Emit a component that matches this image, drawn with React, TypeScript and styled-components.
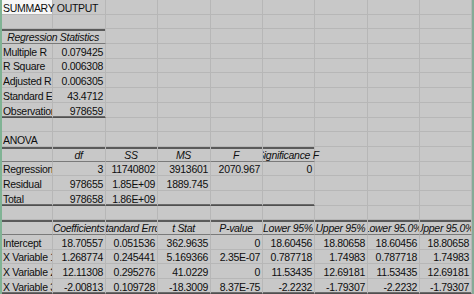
import React from 'react'
import styled, { createGlobalStyle } from 'styled-components'

const GlobalStyle = createGlobalStyle`
  html, body {
    margin: 0;
    padding: 0;
    background: #c8c8c8;
  }
`

const COLS = [51, 53, 52, 53, 52, 52, 53, 52, 52]
const ROW_H = 14.7

const Sheet = styled.div`
  width: 474px;
  height: 294px;
  box-sizing: border-box;
  border-left: 2px solid #80b394;
  border-right: 2px solid #86ab97;
  background: #c8c8c8;
  display: grid;
  grid-template-columns: ${COLS.map((w) => `${w}px`).join(' ')};
  grid-template-rows: repeat(20, ${ROW_H}px);
  overflow: hidden;
  font-family: 'Liberation Sans', Arial, sans-serif;
  font-size: 10.5px;
  letter-spacing: -0.3px;
  color: #0e0e0e;
`

type Align = 'l' | 'r' | 'c'
type Clip = 'both' | 'left' | 'none'

const Cell = styled.div<{
  $align: Align
  $italic?: boolean
  $span?: number
  $clip?: Clip
  $white?: boolean
  $top?: boolean
  $under?: boolean
  $bottom?: boolean
}>`
  grid-column: span ${({ $span }) => $span ?? 1};
  display: flex;
  align-items: flex-end;
  justify-content: ${({ $align }) =>
    $align === 'r' ? 'flex-end' : $align === 'c' ? 'center' : 'flex-start'};
  box-sizing: border-box;
  min-width: 0;
  padding: 0 2px 0 1px;
  line-height: 12px;
  white-space: nowrap;
  overflow: ${({ $clip }) => ($clip === 'both' ? 'hidden' : 'visible')};
  clip-path: ${({ $clip }) => ($clip === 'left' ? 'inset(-4px -40px -4px 0)' : 'none')};
  font-style: ${({ $italic }) => ($italic ? 'italic' : 'normal')};
  background: ${({ $white }) => ($white ? '#f7f7f7' : 'transparent')};
  border-right: 1px solid #b7b7b7;
  border-bottom: 1px solid
    ${({ $bottom, $under }) =>
      $bottom ? '#4f4f4f' : $under ? '#7a7a7a' : '#b7b7b7'};
  box-shadow: ${({ $top, $bottom }) => {
    const s: string[] = []
    if ($top) s.push('inset 0 2px 0 #5a5a5a')
    if ($bottom) s.push('inset 0 -1px 0 #6a6a6a')
    return s.length ? s.join(', ') : 'none'
  }};
`

type Spec = { t: string; a?: Align; i?: boolean; span?: number; clip?: Clip; white?: boolean }

const L = (t: string, clip: Clip = 'both'): Spec => ({ t, a: 'l', clip })
const N = (t: string): Spec => ({ t, a: 'r', clip: 'both' })
const H = (t: string, clip: Clip = 'both'): Spec => ({ t, a: 'c', i: true, clip })

// one entry per sheet row, cells from column A onward
const rows: Spec[][] = [
  [{ t: 'SUMMARY OUTPUT', a: 'l', white: true, clip: 'none' }],
  [],
  [{ t: 'Regression Statistics', a: 'c', i: true, span: 2, clip: 'none' }],
  [L('Multiple R'), N('0.079425')],
  [L('R Square'), N('0.006308')],
  [L('Adjusted R Square'), N('0.006305')],
  [L('Standard Error'), N('43.4712')],
  [L('Observations'), N('978659')],
  [],
  [L('ANOVA', 'none')],
  [L(''), H('df'), H('SS'), H('MS'), H('F'), H('Significance F', 'left')],
  [L('Regression'), N('3'), N('11740802'), N('3913601'), N('2070.967'), N('0')],
  [L('Residual'), N('978655'), N('1.85E+09'), N('1889.745')],
  [L('Total'), N('978658'), N('1.86E+09')],
  [],
  [
    L(''),
    H('Coefficients'),
    H('Standard Error'),
    H('t Stat'),
    H('P-value'),
    H('Lower 95%'),
    H('Upper 95%'),
    H('Lower 95.0%'),
    H('Upper 95.0%'),
  ],
  [L('Intercept'), N('18.70557'), N('0.051536'), N('362.9635'), N('0'), N('18.60456'), N('18.80658'), N('18.60456'), N('18.80658')],
  [L('X Variable 1'), N('1.268774'), N('0.245441'), N('5.169366'), N('2.35E-07'), N('0.787718'), N('1.74983'), N('0.787718'), N('1.74983')],
  [L('X Variable 2'), N('12.11308'), N('0.295276'), N('41.0229'), N('0'), N('11.53435'), N('12.69181'), N('11.53435'), N('12.69181')],
  [L('X Variable 3'), N('-2.00813'), N('0.109728'), N('-18.3009'), N('8.37E-75'), N('-2.2232'), N('-1.79307'), N('-2.2232'), N('-1.79307')],
]

// table borders: header row gets a top rule and an underline, last row a bottom rule
const tables = [
  { head: 2, last: 7, cols: 2 },
  { head: 10, last: 13, cols: 6 },
  { head: 15, last: 19, cols: 9 },
]

const ruleFor = (r: number, c: number) => {
  const t = tables.find((x) => c < x.cols && (r === x.head || r === x.last))
  return {
    top: !!t && r === t.head,
    under: !!t && r === t.head,
    bottom: !!t && r === t.last && r !== t.head,
  }
}

const App = () => {
  return (
    <>
      <GlobalStyle />
      <Sheet>
        {rows.map((row, r) => {
          const cells: React.ReactNode[] = []
          let c = 0
          row.forEach((spec, k) => {
            const rule = ruleFor(r, c)
            cells.push(
              <Cell
                key={`${r}-${k}`}
                $align={spec.a ?? 'l'}
                $italic={spec.i}
                $span={spec.span}
                $clip={spec.clip}
                $white={spec.white}
                $top={rule.top}
                $under={rule.under}
                $bottom={rule.bottom}
              >
                {spec.t}
              </Cell>
            )
            c += spec.span ?? 1
          })
          while (c < COLS.length) {
            const rule = ruleFor(r, c)
            cells.push(
              <Cell
                key={`${r}-e${c}`}
                $align='l'
                $top={rule.top}
                $under={rule.under}
                $bottom={rule.bottom}
              />
            )
            c += 1
          }
          return cells
        })}
      </Sheet>
    </>
  )
}

export default App
